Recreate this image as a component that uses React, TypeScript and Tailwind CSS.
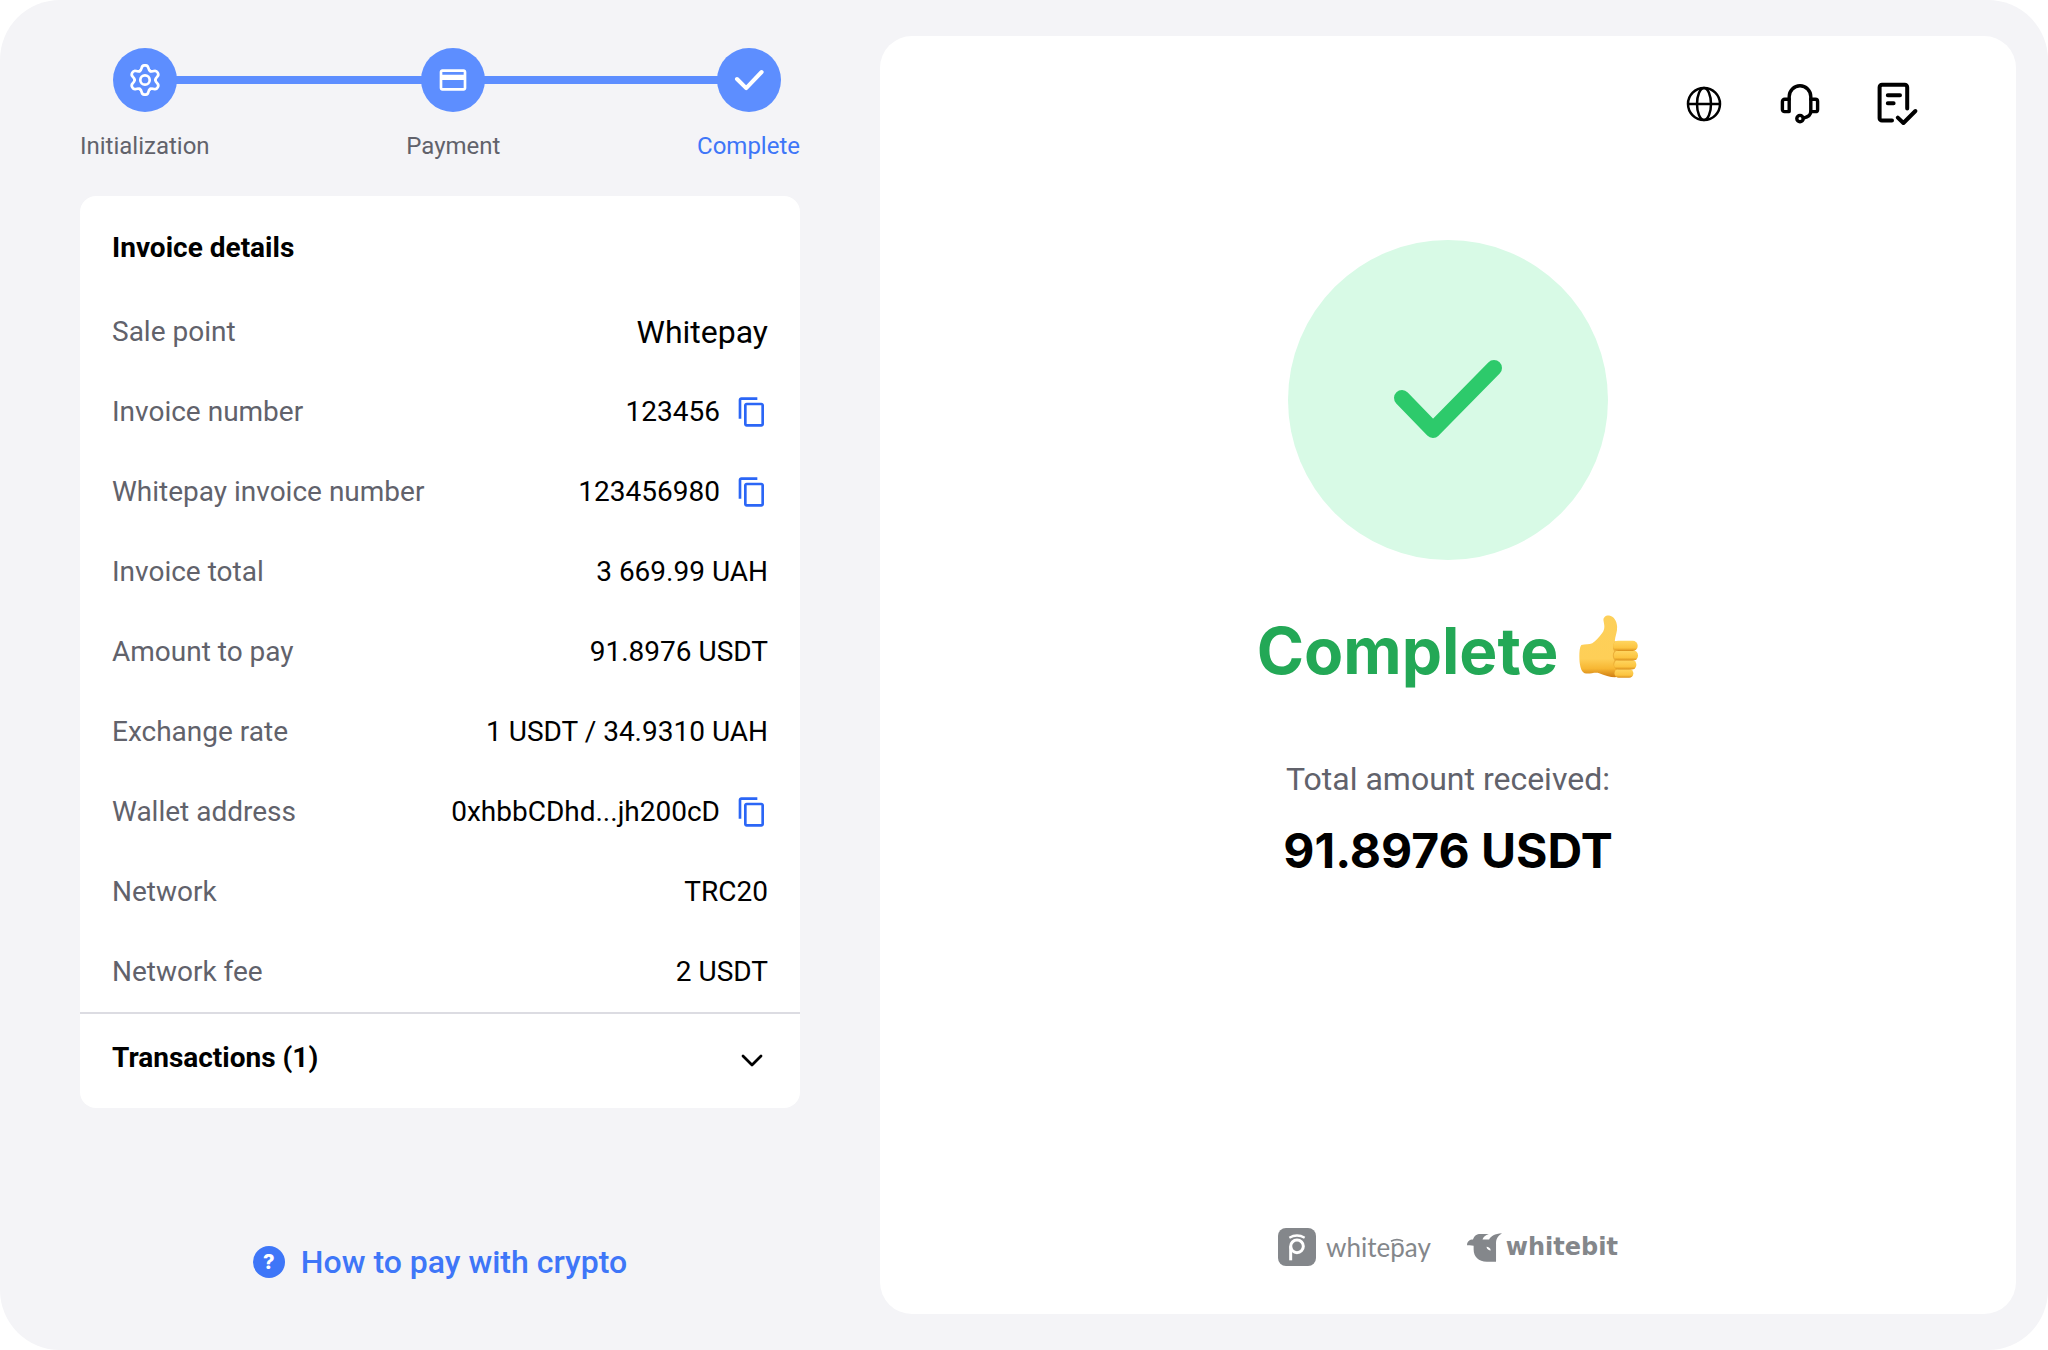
import React, { useState } from 'react';
import { MdContentCopy, MdOutlineCreditCard } from 'react-icons/md';

interface DetailRow {
  label: string;
  value: string;
  copyable?: boolean;
  large?: boolean;
}

const details: DetailRow[] = [
  { label: 'Sale point', value: 'Whitepay', large: true },
  { label: 'Invoice number', value: '123456', copyable: true },
  { label: 'Whitepay invoice number', value: '123456980', copyable: true },
  { label: 'Invoice total', value: '3 669.99 UAH' },
  { label: 'Amount to pay', value: '91.8976 USDT' },
  { label: 'Exchange rate', value: '1 USDT / 34.9310 UAH' },
  { label: 'Wallet address', value: '0xhbbCDhd...jh200cD', copyable: true },
  { label: 'Network', value: 'TRC20' },
  { label: 'Network fee', value: '2 USDT' },
];

// One lobe of the gear, repeated every 60 degrees
const GEAR_LOBE =
  'M-5.2-9C-3.9-9.75-3.6-10.8-3.3-12.2C-2.9-14.2-2-14.7 0-14.7C2-14.7 2.9-14.2 3.3-12.2C3.6-10.8 3.9-9.75 5.2-9';

const GearIcon = () => (
  <svg viewBox="-16 -16 32 32" className="size-8" fill="none" stroke="currentColor" strokeWidth="2.7" strokeLinecap="round">
    {[0, 60, 120, 180, 240, 300].map((angle) => (
      <path key={angle} d={GEAR_LOBE} transform={`rotate(${angle})`} />
    ))}
    <circle r="4.7" />
  </svg>
);

const StepCheckIcon = () => (
  <svg viewBox="0 0 32 32" className="size-8" fill="none" stroke="currentColor" strokeWidth="4" strokeLinecap="round" strokeLinejoin="round">
    <path d="M4 15l9.2 9.2L28.6 8" />
  </svg>
);

const GlobeIcon = () => (
  <svg viewBox="0 0 48 48" className="size-12" fill="none" stroke="currentColor" strokeWidth="2.5">
    <circle cx="24" cy="24" r="16" />
    <ellipse cx="24" cy="24" rx="7" ry="16" />
    <path d="M8 24h32" />
  </svg>
);

const HeadsetIcon = () => (
  <svg viewBox="0 0 48 48" className="size-12" fill="none" stroke="currentColor" strokeWidth="3.4" strokeLinecap="round" strokeLinejoin="round">
    <path d="M13.2 19.2V31.6H8.6a2.2 2.2 0 0 1-2.2-2.2V21.4a2.2 2.2 0 0 1 2.2-2.2h4.6" />
    <path d="M34.8 31.6V19.2h4.6a2.2 2.2 0 0 1 2.2 2.2v8a2.2 2.2 0 0 1-2.2 2.2z" />
    <path d="M13.2 19.2v-2.6a10.8 10.8 0 0 1 21.6 0v2.6" />
    <path d="M34.8 31.6c0 3.4-3 5.6-7.4 6.6" />
    <circle cx="24" cy="38.6" r="3.2" />
  </svg>
);

const ReceiptIcon = () => (
  <svg viewBox="0 0 48 48" className="size-12" fill="none" stroke="currentColor" strokeWidth="4" strokeLinecap="round" strokeLinejoin="round">
    <path d="M20 40.6H10a2.4 2.4 0 0 1-2.4-2.4V7.2A2.4 2.4 0 0 1 10 4.8h22.8a2.4 2.4 0 0 1 2.4 2.4v21.4" />
    <path d="M15.8 15.3h12.2M15.8 23.3h5.8M25.8 37.6l5.6 5.4L43.4 31" />
  </svg>
);

const ThumbsUp = () => (
  <svg viewBox="0 0 184 198" className="mb-2 h-[66px] w-[61px]" role="img" aria-label="thumbs up">
    <defs>
      <linearGradient id="hand" x1="0" y1="0" x2="0" y2="1">
        <stop offset="0" stopColor="#fdd05a" />
        <stop offset="0.7" stopColor="#fecf57" />
        <stop offset="0.86" stopColor="#f7b733" />
        <stop offset="1" stopColor="#cf7d14" />
      </linearGradient>
      <linearGradient id="finger" x1="0" y1="0" x2="0" y2="1">
        <stop offset="0" stopColor="#ffd660" />
        <stop offset="0.7" stopColor="#fcc440" />
        <stop offset="1" stopColor="#d98e1a" />
      </linearGradient>
    </defs>
    <path
      fill="url(#hand)"
      d="M10 93C22 90 34 92 43 88C54 80 64 70 73 57C83 44 79 32 77 20C75 9 84 3 94 4C108 6 117 20 118 38C119 54 112 67 111 80L128 100L126 186L112 190C96 190 80 184 64 178C50 174 34 182 20 178C8 174 4 150 4 128C4 112 5 100 10 93Z"
    />
    <path fill="#e09a24" opacity="0.6" d="M113 82C104 90 104 104 109 112C103 120 104 132 110 140C104 150 108 160 115 166L114 184L136 186V90Z" />
    <rect x="110" y="165" width="57" height="27" rx="13" fill="url(#finger)" />
    <rect x="109" y="138" width="67" height="29" rx="14" fill="url(#finger)" />
    <rect x="108" y="109" width="73" height="31" rx="15" fill="url(#finger)" />
    <rect x="106" y="80" width="74" height="31" rx="15" fill="url(#finger)" />
  </svg>
);

const WhitepayMark = () => (
  <svg viewBox="0 0 114 114" className="size-[38px]">
    <rect width="114" height="114" rx="24" fill="#84878b" />
    <g fill="none" stroke="#fff" strokeWidth="9">
      <circle cx="57" cy="55" r="19" />
      <path d="M38 55V97" />
      <path d="M34 29Q57 16 80 29" strokeWidth="7" />
    </g>
  </svg>
);

const WhitebitMark = () => (
  <svg viewBox="0 0 106 88" className="h-[29px] w-[35px]">
    <path
      fill="#84878b"
      d="M0 37C0 26 8 20 18 20C22 8 30 3 40 3H66C56 6 49 12 47 20H67C72 10 84 2 106 1C92 10 88 20 88 32V87H60C35 87 20 72 20 50V39C14 36 6 37 0 37Z"
    />
    <path fill="#fff" d="M59 42C65 42 71 46 72 53C66 53 60 50 59 42Z" />
  </svg>
);

interface StepProps {
  label: string;
  active?: boolean;
  children: React.ReactNode;
}

const Step = ({ label, active = false, children }: StepProps) => (
  <li className="z-10 flex flex-col items-center gap-4" aria-current={active ? 'step' : undefined}>
    <span className="flex size-16 items-center justify-center rounded-full bg-[#5d8eff] text-white">{children}</span>
    <span className={`text-2xl leading-9 ${active ? 'text-[#3e76f8]' : 'text-[#61626b]'}`}>{label}</span>
  </li>
);

const StepLine = () => <li aria-hidden="true" className="-mx-10 mt-7 h-2 flex-1 bg-[#5d8eff]" />;

const InvoiceCard = () => {
  const [open, setOpen] = useState(false);

  return (
    <section className="rounded-2xl bg-white text-[28px] leading-10 text-black">
      <h2 className="px-8 pt-8 pb-6 font-bold">Invoice details</h2>
      <dl>
        {details.map(({ label, value, copyable, large }) => (
          <div key={label} className="flex h-20 items-center justify-between px-8">
            <dt className="text-[#61626b]">{label}</dt>
            <dd className={`flex items-center gap-4 ${large ? 'text-[32px]' : ''}`}>
              {value}
              {copyable && (
                <button
                  type="button"
                  aria-label={`Copy ${label.toLowerCase()}`}
                  className="text-[#2b66f6]"
                  onClick={() => navigator.clipboard?.writeText(value)}
                >
                  <MdContentCopy className="size-8" />
                </button>
              )}
            </dd>
          </div>
        ))}
      </dl>
      <button
        type="button"
        aria-expanded={open}
        onClick={() => setOpen(!open)}
        className="flex w-full items-center justify-between border-t-2 border-[#dcdce2] px-8 pt-6 pb-[30px] font-bold"
      >
        Transactions (1)
        <svg viewBox="0 0 32 32" className={`mt-1 size-8 ${open ? 'rotate-180' : ''}`} fill="none" stroke="currentColor" strokeWidth="2.8" strokeLinecap="round" strokeLinejoin="round">
          <path d="M7 12l9 9 9-9" />
        </svg>
      </button>
      {open && <p className="px-8 pb-7 text-[#61626b]">91.8976 USDT</p>}
    </section>
  );
};

export default function App() {
  return (
    <div className="bg-white">
      <div className="grid min-h-screen grid-cols-[55fr_73fr] rounded-[60px] bg-[#f4f4f7] font-['Roboto',sans-serif]">
        <aside className="flex flex-col px-20 pt-12 pb-[68px]">
          <ol className="mb-8 flex items-start">
            <Step label="Initialization">
              <GearIcon />
            </Step>
            <StepLine />
            <Step label="Payment">
              <MdOutlineCreditCard className="size-8" />
            </Step>
            <StepLine />
            <Step label="Complete" active>
              <StepCheckIcon />
            </Step>
          </ol>

          <InvoiceCard />

          <a href="#help" className="mt-auto flex items-center justify-center gap-4 text-[32px] leading-10 font-medium text-[#3e76f8]">
            <span className="flex size-8 items-center justify-center rounded-full bg-[#3e76f8] font-['Inter',sans-serif] text-xl leading-8 font-extrabold text-white">
              ?
            </span>
            How to pay with crypto
          </a>
        </aside>

        <main className="my-9 mr-8 flex flex-col items-center rounded-[32px] bg-white pt-11 pb-12">
          <nav className="flex gap-12 self-end pr-24 text-black">
            <button type="button" aria-label="Language">
              <GlobeIcon />
            </button>
            <button type="button" aria-label="Support">
              <HeadsetIcon />
            </button>
            <button type="button" aria-label="Receipt">
              <ReceiptIcon />
            </button>
          </nav>

          <div className="mt-28 size-80 rounded-full bg-[#d8fae6]">
            <svg viewBox="0 0 320 320" fill="none" stroke="#2dca6b" strokeWidth="16" strokeLinecap="round" strokeLinejoin="round">
              <path d="M114 158l31 32 61-62" />
            </svg>
          </div>

          <h1 className="mt-[51px] flex items-center gap-5 font-['Inter',sans-serif] text-[64px] leading-20 font-bold text-[#23a856]">
            Complete
            <ThumbsUp />
          </h1>

          <p className="mt-17 text-[32px] leading-10 text-[#61626b]">Total amount received:</p>
          <p className="mt-5 font-['Inter',sans-serif] text-5xl leading-16 font-bold text-black">91.8976 USDT</p>

          <footer className="mt-auto flex items-center gap-9 text-[#84878b]">
            <a href="#whitepay" className="flex items-center gap-2.5">
              <WhitepayMark />
              <span className="flex font-['Lato',sans-serif] text-[26px] leading-8">
                white
                <span className="relative">
                  p
                  <svg viewBox="0 0 14 4" className="absolute top-[7px] left-0 h-1 w-3.5" fill="none" stroke="currentColor" strokeWidth="1.6">
                    <path d="M1 3.2Q7 0 13 3.2" />
                  </svg>
                </span>
                ay
              </span>
            </a>
            <a href="#whitebit" className="flex items-center gap-1">
              <WhitebitMark />
              <span className="font-['DejaVu_Sans',sans-serif] text-2xl leading-8 font-bold">whitebit</span>
            </a>
          </footer>
        </main>
      </div>
    </div>
  );
}
